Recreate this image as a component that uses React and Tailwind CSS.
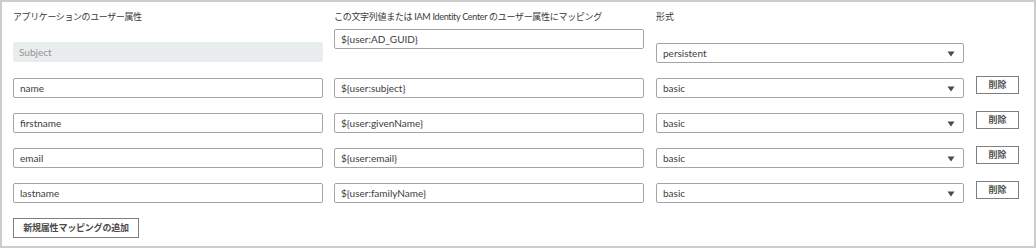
import React from "react";

const font = { fontFamily: '"Lato", "Noto Sans CJK JP", sans-serif' };

function Field({ value, muted }) {
  if (muted) {
    return (
      <div className="h-[20px] w-full rounded-[2px] bg-[#eaeded] px-[6px] flex items-center text-[10px] text-[#8f9596]">
        {value}
      </div>
    );
  }
  return (
    <div className="h-[20px] w-full rounded-[2px] border border-[#a5a5a5] bg-white px-[6px] flex items-center text-[10px] text-[#3d3d3d]">
      {value}
    </div>
  );
}

function Select({ value }) {
  return (
    <div className="h-[20px] w-full rounded-[2px] border border-[#a5a5a5] bg-white pl-[6px] pr-[8px] flex items-center justify-between text-[10px] text-[#3d3d3d]">
      <span>{value}</span>
      <svg width="8" height="6" viewBox="0 0 8 6" className="mt-[2px]">
        <polygon points="0.5,0.5 7.5,0.5 4,5.5" fill="#4a4a4a" />
      </svg>
    </div>
  );
}

function DelButton() {
  return (
    <div className="-mt-[2px] h-[18px] w-[43px] border border-[#7f7f7f] bg-white flex items-center justify-center text-[9px] font-semibold text-[#555555]">
      削除
    </div>
  );
}

const rows = [
  ["name", "${user:subject}"],
  ["firstname", "${user:givenName}"],
  ["email", "${user:email}"],
  ["lastname", "${user:familyName}"],
];

export default function App() {
  return (
    <div
      style={font}
      className="w-[1036px] h-[248px] bg-white border-2 border-[#cccccc] box-border pl-[11px] pt-[6px]"
    >
      <div className="grid grid-cols-[310px_310px_309px_43px] gap-x-[11px]">
        <div className="flex flex-col">
          <div className="h-[16px] leading-[18px] text-[9px] tracking-[-0.4px] text-[#3a3a3a] whitespace-nowrap">アプリケーションのユーザー属性</div>
          <div className="mt-[18px]">
            <Field value="Subject" muted />
          </div>
        </div>
        <div className="flex flex-col">
          <div className="h-[16px] leading-[18px] text-[9px] tracking-[-0.3px] text-[#3a3a3a] whitespace-nowrap">この文字列値または IAM Identity Center のユーザー属性にマッピング</div>
          <div className="mt-[5px]">
            <Field value="${user:AD_GUID}" />
          </div>
        </div>
        <div className="flex flex-col pl-[1px]">
          <div className="h-[16px] leading-[18px] text-[9px] text-[#3a3a3a] whitespace-nowrap">形式</div>
          <div className="mt-[19px]">
            <Select value="persistent" />
          </div>
        </div>
        <div />
      </div>

      <div className="mt-[15px] flex flex-col gap-y-[15px]">
        {rows.map(([a, b]) => (
          <div key={a} className="grid grid-cols-[310px_310px_309px_43px] gap-x-[11px] items-start">
            <Field value={a} />
            <Field value={b} />
            <div className="pl-[1px]">
              <Select value="basic" />
            </div>
            <div className="pl-[1px]">
              <DelButton />
            </div>
          </div>
        ))}
      </div>

      <div className="mt-[15px] h-[20px] w-[126px] border border-[#7f7f7f] bg-white flex items-center justify-center text-[9px] font-semibold tracking-[-0.2px] text-[#4a4a4a]">
        新規属性マッピングの追加
      </div>
    </div>
  );
}
